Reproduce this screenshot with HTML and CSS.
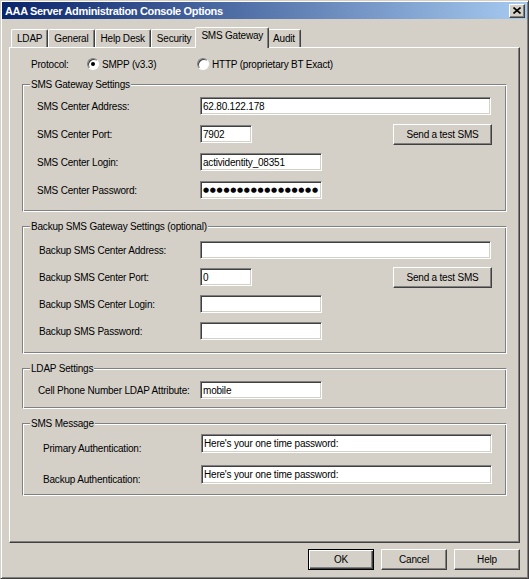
FILE: index.html
```html
<!DOCTYPE html>
<html lang="en">
<head>
  <meta charset="UTF-8">
  <title>AAA Server Administration Console Options</title>
  <link rel="stylesheet" href="styles.css">
</head>
<body>
  <div class="window">
    <div class="titlebar">
      <span class="title">AAA Server Administration Console Options</span>
      <span class="close">
        <svg width="8" height="7" viewBox="0 0 8 7">
          <path d="M0.5 0.5 L7.5 6.5 M7.5 0.5 L0.5 6.5" stroke="#000" stroke-width="1.6" fill="none"/>
        </svg>
      </span>
    </div>

    <div class="tabs">
      <div class="tab">LDAP</div>
      <div class="tab">General</div>
      <div class="tab">Help Desk</div>
      <div class="tab">Security</div>
      <div class="tab active">SMS Gateway</div>
      <div class="tab">Audit</div>
    </div>

    <div class="panel">
      <div class="protocol">
        <span class="proto-label">Protocol:</span>
        <span class="option first"><span class="radio checked"></span>SMPP (v3.3)</span>
        <span class="option"><span class="radio"></span>HTTP (proprietary BT Exact)</span>
      </div>

      <div class="group gateway">
        <span class="legend">SMS Gateway Settings</span>
        <div class="row">
          <label>SMS Center Address:</label>
          <input class="field wide" value="62.80.122.178">
        </div>
        <div class="row">
          <label>SMS Center Port:</label>
          <input class="field port" value="7902">
          <button class="btn send">Send a test SMS</button>
        </div>
        <div class="row">
          <label>SMS Center Login:</label>
          <input class="field mid" value="actividentity_08351">
        </div>
        <div class="row">
          <label>SMS Center Password:</label>
          <div class="field mid secret">●●●●●●●●●●●●●●●●●</div>
        </div>
      </div>

      <div class="group backup">
        <span class="legend">Backup SMS Gateway Settings (optional)</span>
        <div class="row">
          <label>Backup SMS Center Address:</label>
          <input class="field wide" value="">
        </div>
        <div class="row">
          <label>Backup SMS Center Port:</label>
          <input class="field port" value="0">
          <button class="btn send">Send a test SMS</button>
        </div>
        <div class="row">
          <label>Backup SMS Center Login:</label>
          <input class="field mid" value="">
        </div>
        <div class="row">
          <label>Backup SMS Password:</label>
          <input class="field mid" value="">
        </div>
      </div>

      <div class="group ldap">
        <span class="legend">LDAP Settings</span>
        <div class="row">
          <label>Cell Phone Number LDAP Attribute:</label>
          <input class="field mid" value="mobile">
        </div>
      </div>

      <div class="group message">
        <span class="legend">SMS Message</span>
        <div class="row">
          <label>Primary Authentication:</label>
          <input class="field wide" value="Here's your one time password:">
        </div>
        <div class="row">
          <label>Backup Authentication:</label>
          <input class="field wide" value="Here's your one time password:">
        </div>
      </div>
    </div>

    <div class="footer">
      <button class="btn default">OK</button>
      <button class="btn">Cancel</button>
      <button class="btn">Help</button>
    </div>
  </div>
</body>
</html>
```

FILE: styles.css
```css
body {
  margin: 0;
  font-family: "Liberation Sans", Arial, sans-serif;
  font-size: 10px;
  letter-spacing: -0.2px;
  color: #000;
  background-color: #d4d0c8;
}
.window {
  width: 529px;
  height: 579px;
  box-sizing: border-box;
  padding: 1px;
  background-color: #d4d0c8;
  border: 1px solid;
  border-color: #d4d0c8 #404040 #404040 #d4d0c8;
  box-shadow: inset 1px 1px 0 #fff, inset -1px -1px 0 #808080;
}
.titlebar {
  height: 17px;
  display: flex;
  align-items: center;
  padding: 0 2px 0 3px;
  background: linear-gradient(to right, #0a246a, #a6caf0);
  color: #fff;
  font-size: 11px;
  font-weight: bold;
  letter-spacing: -0.35px;
}
.title { flex: 1; }
.close {
  width: 16px;
  height: 14px;
  box-sizing: border-box;
  display: flex;
  align-items: center;
  justify-content: center;
  background-color: #d4d0c8;
  border: 1px solid;
  border-color: #fff #404040 #404040 #fff;
  box-shadow: inset -1px -1px 0 #808080;
}

/* tab strip */
.tabs {
  display: flex;
  align-items: flex-end;
  height: 21px;
  margin: 8px 0 0 9px;
}
.tab {
  height: 18px;
  margin-bottom: 1px;
  padding: 0 5px;
  box-sizing: border-box;
  line-height: 17px;
  border: 1px solid;
  border-bottom: none;
  border-color: #fff #404040 transparent #fff;
  border-radius: 2px 2px 0 0;
  box-shadow: inset -1px 0 0 #808080;
}
.tab.active {
  position: relative;
  z-index: 1;
  height: 21px;
  margin: 0 -2px;
  padding: 0 5px;
  line-height: 16px;
  background-color: #d4d0c8;
}
.panel {
  margin: -1px 7px 0;
  height: 496px;
  box-sizing: border-box;
  padding: 8px 12px 0;
  border: 1px solid;
  border-color: #fff #404040 #404040 #fff;
  box-shadow: inset -1px -1px 0 #808080;
}

/* protocol choice */
.protocol {
  display: flex;
  align-items: center;
  height: 16px;
  padding-left: 9px;
}
.proto-label { width: 56px; }
.option {
  display: flex;
  align-items: center;
  gap: 3px;
}
.option.first { width: 110px; }
.radio {
  width: 12px;
  height: 12px;
  box-sizing: border-box;
  border-radius: 50%;
  background-color: #fff;
  border: 1px solid;
  border-color: #808080 #fff #fff #808080;
  box-shadow: inset 1px 1px 0 #404040;
  display: flex;
  align-items: center;
  justify-content: center;
}
.radio.checked::after {
  content: "";
  width: 4px;
  height: 4px;
  border-radius: 50%;
  background-color: #000;
}

/* group boxes */
.group {
  position: relative;
  display: flex;
  flex-direction: column;
  margin-top: 14px;
  border: 1px solid;
  border-color: #808080 #fff #fff #808080;
  box-shadow: inset 1px 1px 0 #fff, inset -1px -1px 0 #808080;
}
.legend {
  position: absolute;
  top: -7px;
  left: 7px;
  padding: 0 1px;
  line-height: 13px;
  background-color: #d4d0c8;
}
.gateway { margin-top: 12px; padding: 12px 14px; gap: 10px; }
.backup { padding: 14px 14px 13px 16px; gap: 9px; }
.ldap { padding: 12px 14px 9px 15px; }
.message { padding: 10px 14px 11px 20px; gap: 12px; }

.row {
  display: flex;
  align-items: center;
  height: 18px;
}
.row label { width: 163px; flex: none; white-space: nowrap; }
.backup .row label { width: 161px; }
.ldap .row label { width: 162px; }
.message .row { height: 19px; }
.message .row label { width: 158px; padding-top: 9px; }

.field {
  box-sizing: border-box;
  height: 18px;
  margin: 0;
  padding: 0 2px;
  background-color: #fff;
  border: 1px solid;
  border-color: #808080 #fff #fff #808080;
  box-shadow: inset 1px 1px 0 #404040, inset -1px -1px 0 #d4d0c8;
  font: inherit;
  letter-spacing: inherit;
  color: #000;
  outline: none;
}
.wide { width: 291px; }
.port { width: 52px; }
.mid { width: 122px; }
.message .field { width: 292px; height: 19px; }
.secret {
  display: flex;
  align-items: center;
  font-family: "DejaVu Sans", sans-serif;
  font-size: 7px;
  letter-spacing: 0.7px;
}

/* push buttons */
.btn {
  box-sizing: border-box;
  height: 21px;
  padding: 0;
  background-color: #d4d0c8;
  border: 1px solid;
  border-color: #fff #404040 #404040 #fff;
  box-shadow: inset -1px -1px 0 #808080;
  font: inherit;
  letter-spacing: inherit;
  color: #000;
}
.send {
  width: 99px;
  margin: -1px 0 -2px auto;
}
.footer {
  display: flex;
  justify-content: flex-end;
  gap: 7px;
  margin: 6px 7px 0;
}
.footer .btn { width: 66px; }
.btn.default {
  border-color: #000;
  box-shadow: inset 1px 1px 0 #fff, inset -1px -1px 0 #404040, inset -2px -2px 0 #808080;
}
```
